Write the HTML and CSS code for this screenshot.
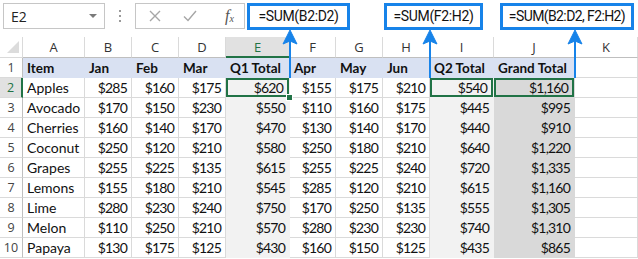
FILE: index.html
```html
<!DOCTYPE html>
<html lang="en">
<head>
    <meta charset="UTF-8">
    <title>SUM formulas</title>
    <link rel="stylesheet" href="styles.css">
</head>
<body>
    <div class="toolbar">
        <div class="namebox"><span>E2</span><span class="caret"></span></div>
        <div class="dots"><i></i><i></i><i></i></div>
        <div class="fbuttons">
            <svg class="btn" width="12" height="12" viewBox="0 0 12 12"><path d="M1 1 L11 11 M11 1 L1 11" stroke="#a6a6a6" stroke-width="1.4" fill="none"/></svg>
            <svg class="btn" width="14" height="12" viewBox="0 0 14 12"><path d="M1 6.5 L5 10.5 L13 1" stroke="#a6a6a6" stroke-width="1.4" fill="none"/></svg>
            <span class="fx">f<sub>x</sub></span>
        </div>
        <div class="callout c1">=SUM(B2:D2)</div>
        <div class="callout c2">=SUM(F2:H2)</div>
        <div class="callout c3">=SUM(B2:D2, F2:H2)</div>
    </div>

    <div class="sheet">
        <div class="corner"><span class="tri"></span></div>
        <div class="ch">A</div><div class="ch">B</div><div class="ch">C</div><div class="ch">D</div>
        <div class="ch active">E</div><div class="ch">F</div><div class="ch">G</div><div class="ch">H</div>
        <div class="ch">I</div><div class="ch">J</div><div class="ch">K</div>

        <div class="rh">1</div>
        <div class="c h">Item</div><div class="c h">Jan</div><div class="c h">Feb</div><div class="c h">Mar</div>
        <div class="c h">Q1 Total</div><div class="c h">Apr</div><div class="c h">May</div><div class="c h">Jun</div>
        <div class="c h">Q2 Total</div><div class="c h">Grand Total</div><div class="c"></div>

        <div class="rh active">2</div>
        <div class="c">Apples</div><div class="c n">$285</div><div class="c n">$160</div><div class="c n">$175</div>
        <div class="c n q sel handle">$620</div><div class="c n">$155</div><div class="c n">$175</div><div class="c n">$210</div>
        <div class="c n q sel">$540</div><div class="c n g sel">$1,160</div><div class="c"></div>

        <div class="rh">3</div>
        <div class="c">Avocado</div><div class="c n">$170</div><div class="c n">$150</div><div class="c n">$230</div>
        <div class="c n q">$550</div><div class="c n">$110</div><div class="c n">$160</div><div class="c n">$175</div>
        <div class="c n q">$445</div><div class="c n g">$995</div><div class="c"></div>

        <div class="rh">4</div>
        <div class="c">Cherries</div><div class="c n">$160</div><div class="c n">$140</div><div class="c n">$170</div>
        <div class="c n q">$470</div><div class="c n">$130</div><div class="c n">$140</div><div class="c n">$170</div>
        <div class="c n q">$440</div><div class="c n g">$910</div><div class="c"></div>

        <div class="rh">5</div>
        <div class="c">Coconut</div><div class="c n">$250</div><div class="c n">$120</div><div class="c n">$210</div>
        <div class="c n q">$580</div><div class="c n">$250</div><div class="c n">$180</div><div class="c n">$210</div>
        <div class="c n q">$640</div><div class="c n g">$1,220</div><div class="c"></div>

        <div class="rh">6</div>
        <div class="c">Grapes</div><div class="c n">$255</div><div class="c n">$225</div><div class="c n">$135</div>
        <div class="c n q">$615</div><div class="c n">$255</div><div class="c n">$225</div><div class="c n">$240</div>
        <div class="c n q">$720</div><div class="c n g">$1,335</div><div class="c"></div>

        <div class="rh">7</div>
        <div class="c">Lemons</div><div class="c n">$155</div><div class="c n">$180</div><div class="c n">$210</div>
        <div class="c n q">$545</div><div class="c n">$285</div><div class="c n">$120</div><div class="c n">$210</div>
        <div class="c n q">$615</div><div class="c n g">$1,160</div><div class="c"></div>

        <div class="rh">8</div>
        <div class="c">Lime</div><div class="c n">$280</div><div class="c n">$230</div><div class="c n">$240</div>
        <div class="c n q">$750</div><div class="c n">$170</div><div class="c n">$250</div><div class="c n">$135</div>
        <div class="c n q">$555</div><div class="c n g">$1,305</div><div class="c"></div>

        <div class="rh">9</div>
        <div class="c">Melon</div><div class="c n">$110</div><div class="c n">$250</div><div class="c n">$210</div>
        <div class="c n q">$570</div><div class="c n">$280</div><div class="c n">$230</div><div class="c n">$230</div>
        <div class="c n q">$740</div><div class="c n g">$1,310</div><div class="c"></div>

        <div class="rh">10</div>
        <div class="c">Papaya</div><div class="c n">$130</div><div class="c n">$175</div><div class="c n">$125</div>
        <div class="c n q">$430</div><div class="c n">$160</div><div class="c n">$150</div><div class="c n">$125</div>
        <div class="c n q">$435</div><div class="c n g">$865</div><div class="c"></div>
    </div>

    <!-- callout arrows drawn over the sheet -->
    <svg class="arrows" width="638" height="259" viewBox="0 0 638 259">
        <g fill="#1783e9" stroke="#1783e9">
            <line x1="290" y1="38" x2="290" y2="78" stroke-width="2"/>
            <path d="M290 30 L297 44 L290 41 L283 44 Z" stroke-width="1"/>
            <line x1="430" y1="38" x2="430" y2="78" stroke-width="2"/>
            <path d="M430 30 L437 44 L430 41 L423 44 Z" stroke-width="1"/>
            <line x1="575" y1="38" x2="575" y2="78" stroke-width="2"/>
            <path d="M575 30 L582 44 L575 41 L568 44 Z" stroke-width="1"/>
        </g>
    </svg>
</body>
</html>
```

FILE: styles.css
```css
body {
    margin: 0;
    width: 638px;
    height: 259px;
    overflow: hidden;
    background-color: #fff;
    color: #000;
    font-family: "Open Sans", "Noto Sans", sans-serif;
    position: relative;
}
.toolbar {
    display: flex;
    align-items: flex-start;
    height: 37px;
    padding: 3px 0 0 3px;
    box-sizing: border-box;
}
.namebox {
    width: 102px;
    height: 26px;
    box-sizing: border-box;
    border: 1px solid #c6c6c6;
    display: flex;
    align-items: center;
    justify-content: space-between;
    padding: 0 7px 0 7px;
    font-size: 14px;
    color: #222;
}
.caret {
    width: 0;
    height: 0;
    border-left: 4px solid transparent;
    border-right: 4px solid transparent;
    border-top: 4px solid #7a7a7a;
}
.dots {
    width: 30px;
    height: 26px;
    display: flex;
    flex-direction: column;
    align-items: center;
    justify-content: center;
    gap: 3px;
}
.dots i {
    width: 2px;
    height: 2px;
    background-color: #9a9a9a;
}
.fbuttons {
    width: 110px;
    height: 26px;
    box-sizing: border-box;
    border: 1px solid #c6c6c6;
    display: flex;
    align-items: center;
    padding: 0 10px 0 13px;
    gap: 22px;
}
.fx {
    margin-left: auto;
    font-family: "Liberation Serif", serif;
    font-style: italic;
    font-size: 16px;
    color: #555;
}
.fx sub {
    font-size: 10px;
    vertical-align: -1px;
}
.callout {
    height: 27px;
    box-sizing: border-box;
    border: 3px solid #1783e9;
    font-family: Roboto, "Open Sans", sans-serif;
    font-size: 14px;
    letter-spacing: -0.35px;
    line-height: 21px;
    text-align: center;
    white-space: nowrap;
    color: #111;
}
.c1 {
    width: 103px;
    margin-left: 2px;
}
.c2 {
    width: 99px;
    margin-left: 34px;
}
.c3 {
    width: 134px;
    margin-left: 17px;
    letter-spacing: -0.6px;
}

.sheet {
    display: grid;
    grid-template-columns: 23px 62px 47px 47px 47px 64px 46px 47px 47px 64px 81px 63px;
    grid-template-rows: 21px repeat(10, 20px);
    font-family: Lato, "Liberation Sans", sans-serif;
    font-size: 14px;
}
.sheet > div {
    box-sizing: border-box;
    border-right: 1px solid #dadada;
    border-bottom: 1px solid #dadada;
    white-space: nowrap;
    overflow: visible;
}
.corner {
    position: relative;
}
.tri {
    position: absolute;
    right: 3px;
    bottom: 4px;
    width: 0;
    height: 0;
    border-left: 12px solid transparent;
    border-bottom: 12px solid #dcdcdc;
}
.ch {
    font-family: "Open Sans", sans-serif;
    font-size: 13px;
    text-align: center;
    line-height: 21px;
    color: #333;
    border-bottom-color: #bfbfbf !important;
}
.ch.active {
    background-color: #e1e1e1;
    color: #217346;
    border-bottom: 2px solid #217346 !important;
}
.rh {
    font-family: "Open Sans", sans-serif;
    font-size: 12.5px;
    text-align: center;
    line-height: 19px;
    color: #444;
    border-right-color: #bfbfbf !important;
}
.rh.active {
    background-color: #e1e1e1;
    color: #217346;
    border-right: 2px solid #217346 !important;
}
.c {
    line-height: 20px;
    padding: 0 4px;
    color: #111;
}
.n {
    text-align: right;
    letter-spacing: -0.8px;
}
.h {
    background-color: #d9e1f2;
    font-weight: bold;
    font-size: 13.5px;
    border-color: #d9e1f2 !important;
}
.q {
    background-color: #f2f2f2;
    border-color: #f2f2f2 !important;
}
.g {
    background-color: #d9d9d9;
    border-color: #d9d9d9 !important;
}
.sel {
    box-shadow: inset 0 0 0 2px #217346;
    padding-right: 6px;
}
.handle {
    position: relative;
}
.handle::after {
    content: "";
    position: absolute;
    right: -4px;
    bottom: -4px;
    width: 5px;
    height: 5px;
    background-color: #217346;
    border: 1px solid #fff;
}
.arrows {
    position: absolute;
    top: 0;
    left: 0;
    pointer-events: none;
}
```
